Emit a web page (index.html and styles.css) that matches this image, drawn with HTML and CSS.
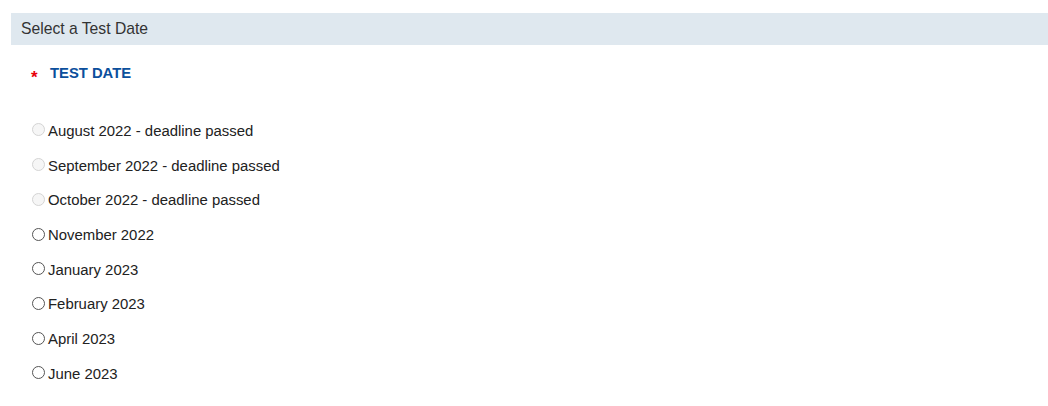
FILE: index.html
```html
<!DOCTYPE html>
<html>
<head>
<meta charset="utf-8">
<link rel="stylesheet" href="styles.css">
</head>
<body>
<div class="page">
  <div class="section-header">Select a Test Date</div>
  <div class="field-label">
    <span class="required">*</span>
    <span class="label-text">TEST DATE</span>
  </div>
  <div class="options">
    <label class="option"><input type="radio" name="date" disabled><span>August 2022 - deadline passed</span></label>
    <label class="option"><input type="radio" name="date" disabled><span>September 2022 - deadline passed</span></label>
    <label class="option"><input type="radio" name="date" disabled><span>October 2022 - deadline passed</span></label>
    <label class="option"><input type="radio" name="date"><span>November 2022</span></label>
    <label class="option"><input type="radio" name="date"><span>January 2023</span></label>
    <label class="option"><input type="radio" name="date"><span>February 2023</span></label>
    <label class="option"><input type="radio" name="date"><span>April 2023</span></label>
    <label class="option"><input type="radio" name="date"><span>June 2023</span></label>
  </div>
</div>
</body>
</html>
```

FILE: styles.css
```css
html, body {
  margin: 0;
  padding: 0;
  background: #ffffff;
}

body {
  font-family: "Liberation Sans", Arial, sans-serif;
  color: #222222;
}

.page {
  padding: 13px 0 0 11px;
}

.section-header {
  height: 32px;
  line-height: 32px;
  background: #dfe8ef;
  padding-left: 10px;
  font-size: 15.7px;
  color: #333333;
}

.field-label {
  display: flex;
  align-items: flex-start;
  margin-top: 19px;
  height: 18px;
  padding-left: 20px;
}

.required {
  width: 19px;
  color: #e8000b;
  font-weight: bold;
  font-size: 17px;
  line-height: 18px;
  padding-top: 5px;
}

.label-text {
  color: #0b4f9c;
  font-weight: bold;
  font-size: 14.8px;
  line-height: 18px;
}

.options {
  margin-top: 31.6px;
  display: flex;
  flex-direction: column;
}

.option {
  display: flex;
  align-items: center;
  height: 34.7px;
  padding-left: 21px;
  font-size: 14.9px;
  color: #222222;
}

.option input {
  appearance: none;
  -webkit-appearance: none;
  width: 13px;
  height: 13px;
  margin: 0 3px 0 0;
  border: 1px solid #555555;
  border-radius: 50%;
  background: #ffffff;
  box-sizing: border-box;
  position: relative;
  top: -1px;
}

.option input:disabled {
  border-color: #d4d4d4;
  background: #f6f6f6;
}
```
